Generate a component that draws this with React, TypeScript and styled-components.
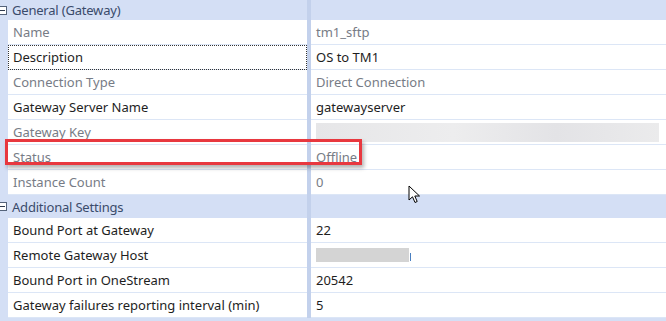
import React from 'react';
import styled, { createGlobalStyle } from 'styled-components';

const colors = {
    band: '#d4dff5',
    divider: '#c3d1ec',
    line: '#dce6f6',
    headText: '#3a4b6b',
    text: '#1e1e1e',
    muted: '#777c86',
    red: '#e8383f',
};

const GlobalStyle = createGlobalStyle`
    html, body {
        margin: 0;
        padding: 0;
        background: ${colors.band};
        overflow: hidden;
    }
    body {
        font-family: "Noto Sans", "Open Sans", sans-serif;
        font-size: 13px;
    }
`;

const Grid = styled.div`
    position: relative;
    width: 666px;
    height: 321px;
    background: ${colors.band};
`;

const CategoryRow = styled.div<{ $h: number }>`
    display: flex;
    height: ${(p) => p.$h}px;
    align-items: stretch;
`;

const CategoryTitle = styled.div`
    width: 307px;
    display: flex;
    align-items: center;
    gap: 5px;
    color: ${colors.headText};
    white-space: nowrap;
    letter-spacing: -0.2px;
`;

const ExpandBox = styled.span`
    display: inline-block;
    position: relative;
    width: 7px;
    height: 7px;
    margin-left: -2px;
    border: 1px solid #55637a;
    background: #fff;
    &::after {
        content: '';
        position: absolute;
        left: 1px;
        right: 1px;
        top: 3px;
        height: 1px;
        background: #2f3a4e;
    }
`;

const Divider = styled.div`
    width: 4px;
    flex: none;
    background: ${colors.divider};
`;

const Row = styled.div`
    display: flex;
    height: 25px;
`;

const Indent = styled.div`
    width: 8px;
    flex: none;
    background: ${colors.band};
`;

const Cell = styled.div<{ $muted?: boolean; $focus?: boolean }>`
    box-sizing: border-box;
    display: flex;
    align-items: center;
    background: #fff;
    border-bottom: 1px solid ${colors.line};
    color: ${(p) => (p.$muted ? colors.muted : colors.text)};
    white-space: nowrap;
    outline: ${(p) => (p.$focus ? '1px dotted #333' : 'none')};
    outline-offset: -1px;
`;

const LabelCell = styled(Cell)`
    width: 299px;
    padding-left: 5px;
`;

const ValueCell = styled(Cell)`
    flex: 1;
    padding-left: 5px;
`;

const Redacted = styled.div<{ $w: number; $h: number; $tone: string }>`
    width: ${(p) => p.$w}px;
    height: ${(p) => p.$h}px;
    background: ${(p) => p.$tone};
    position: relative;
`;

const BlueTick = styled.span`
    position: absolute;
    right: -2px;
    bottom: 1px;
    width: 1px;
    height: 8px;
    background: #4a7fc0;
`;

const Highlight = styled.div`
    position: absolute;
    left: 5px;
    top: 139px;
    width: 357px;
    height: 26px;
    box-sizing: border-box;
    border: 3px solid ${colors.red};
    box-shadow: 2px 3px 4px rgba(0, 0, 0, 0.3);
    pointer-events: none;
`;

const Cursor = styled.svg`
    position: absolute;
    left: 408px;
    top: 185px;
`;

type Prop = { label: string; value?: React.ReactNode; muted?: boolean; focus?: boolean };

const general: Prop[] = [
    { label: 'Name', value: 'tm1_sftp', muted: true },
    { label: 'Description', value: 'OS to TM1', focus: true },
    { label: 'Connection Type', value: 'Direct Connection', muted: true },
    { label: 'Gateway Server Name', value: 'gatewayserver' },
    {
        label: 'Gateway Key',
        muted: true,
        value: (
            <Redacted
                $w={343}
                $h={19}
                $tone="linear-gradient(90deg, #e6e6e8 0%, #ededee 40%, #e3e3e6 70%, #ebebec 100%)"
            />
        ),
    },
    { label: 'Status', value: 'Offline', muted: true },
    { label: 'Instance Count', value: '0', muted: true },
];

const additional: Prop[] = [
    { label: 'Bound Port at Gateway', value: '22' },
    {
        label: 'Remote Gateway Host',
        value: (
            <Redacted $w={93} $h={14} $tone="#d4d4d4">
                <BlueTick />
            </Redacted>
        ),
    },
    { label: 'Bound Port in OneStream', value: '20542' },
    { label: 'Gateway failures reporting interval (min)', value: '5' },
];

const Category = ({ title, h }: { title: string; h: number }) => (
    <CategoryRow $h={h}>
        <CategoryTitle>
            <ExpandBox />
            {title}
        </CategoryTitle>
        <Divider />
    </CategoryRow>
);

const PropRow = ({ p }: { p: Prop }) => (
    <Row>
        <Indent />
        <LabelCell $muted={p.muted} $focus={p.focus}>
            {p.label}
        </LabelCell>
        <Divider />
        <ValueCell $muted={p.muted}>{p.value}</ValueCell>
    </Row>
);

export default function App() {
    return (
        <>
            <GlobalStyle />
            <Grid>
                <Category title="General (Gateway)" h={20} />
                {general.map((p) => (
                    <PropRow key={p.label} p={p} />
                ))}
                <Category title="Additional Settings" h={23} />
                {additional.map((p) => (
                    <PropRow key={p.label} p={p} />
                ))}
                <Highlight />
                <Cursor width="14" height="20" viewBox="0 0 14 20">
                    <path
                        d="M1 1 L1 15 L4.5 11.8 L7 17.5 L9.2 16.5 L6.8 11 L11.5 11 Z"
                        fill="#fff"
                        stroke="#000"
                        strokeWidth="1"
                        strokeLinejoin="round"
                    />
                </Cursor>
            </Grid>
        </>
    );
}
